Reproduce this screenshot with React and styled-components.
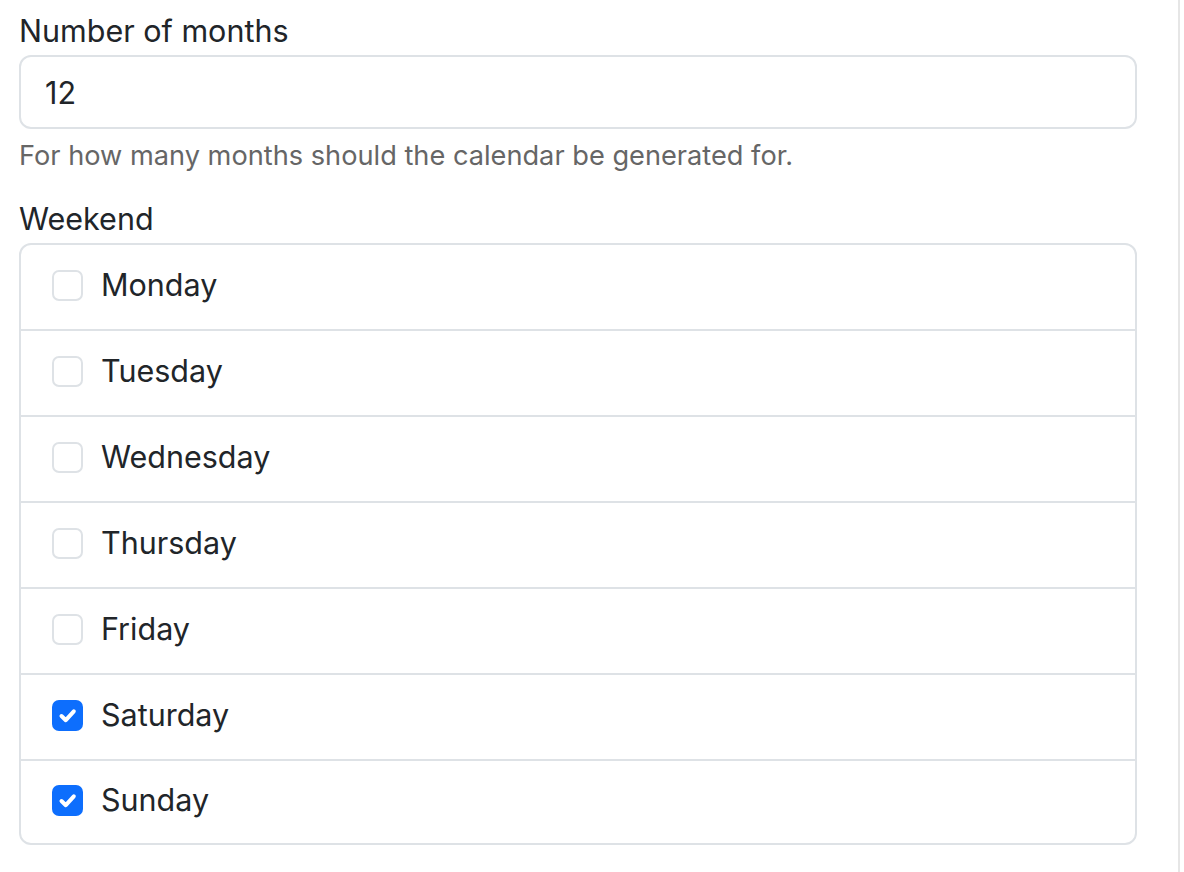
import React, { useState } from 'react';
import styled, { createGlobalStyle } from 'styled-components';

const GlobalStyle = createGlobalStyle`
    html, body {
        margin: 0;
        padding: 0;
        background: #ffffff;
    }
    body {
        font-family: Inter, "Noto Sans", "Liberation Sans", sans-serif;
        color: #212529;
    }
`;

const DAYS = [
    { id: 'mon', label: 'Monday', checked: false },
    { id: 'tue', label: 'Tuesday', checked: false },
    { id: 'wed', label: 'Wednesday', checked: false },
    { id: 'thu', label: 'Thursday', checked: false },
    { id: 'fri', label: 'Friday', checked: false },
    { id: 'sat', label: 'Saturday', checked: true },
    { id: 'sun', label: 'Sunday', checked: true }
];

const App = () => {
    const [months, setMonths] = useState('12');
    const [days, setDays] = useState(DAYS);

    const toggleDay = (id) => {
        setDays(prev => prev.map(d => (d.id === id ? { ...d, checked: !d.checked } : d)));
    };

    return (
        <>
            <GlobalStyle />
            <Page>
                <Form>
                    <Label htmlFor="months">Number of months</Label>
                    <Input
                        id="months"
                        value={months}
                        onChange={(e) => setMonths(e.target.value)}
                    />
                    <HelpText>For how many months should the calendar be generated for.</HelpText>

                    <Label $spaced>Weekend</Label>
                    <DayList>
                        {days.map((day) => (
                            <DayRow key={day.id} onClick={() => toggleDay(day.id)}>
                                <CheckBox $checked={day.checked}>
                                    {day.checked && (
                                        <svg width="31" height="31" viewBox="0 0 31 31" fill="none">
                                            <path
                                                d="M9.5 16l4.3 4.2L21.8 11.3"
                                                stroke="#fff"
                                                strokeWidth="4"
                                                strokeLinecap="round"
                                                strokeLinejoin="round"
                                            />
                                        </svg>
                                    )}
                                </CheckBox>
                                <DayName>{day.label}</DayName>
                            </DayRow>
                        ))}
                    </DayList>
                </Form>
            </Page>
        </>
    );
};

const Page = styled.div`
    width: 1180px;
    min-height: 872px;
    border-right: 2px solid #e6e6e6;
    box-sizing: border-box;
`;

const Form = styled.div`
    width: 1118px;
    padding: 13px 0 0 19px;
    display: flex;
    flex-direction: column;
`;

const Label = styled.label`
    display: block;
    font-size: 30.5px;
    line-height: 36px;
    color: #212529;
    margin-top: ${({ $spaced }) => ($spaced ? '28px' : '0')};
    margin-bottom: 6px;
`;

const Input = styled.input`
    box-sizing: border-box;
    width: 100%;
    height: 74px;
    padding: 0 24px;
    font-family: inherit;
    font-size: 30.5px;
    color: #212529;
    border: 2px solid #dee2e6;
    border-radius: 12px;
    outline: none;
    background: #fff;
`;

const HelpText = styled.div`
    margin-top: 10px;
    font-size: 27.2px;
    line-height: 34px;
    color: #666666;
`;

const DayList = styled.div`
    border: 2px solid #dee2e6;
    border-radius: 12px;
    overflow: hidden;
`;

const DayRow = styled.div`
    box-sizing: border-box;
    display: flex;
    align-items: center;
    gap: 18px;
    height: 86px;
    padding: 0 0 4px 31px;
    border-bottom: 2px solid #dee2e6;
    cursor: pointer;

    &:last-child {
        height: 82px;
        border-bottom: none;
    }
`;

const CheckBox = styled.span`
    box-sizing: border-box;
    width: 31px;
    height: 31px;
    border-radius: 7px;
    display: flex;
    align-items: center;
    justify-content: center;
    border: ${({ $checked }) => ($checked ? 'none' : '2px solid #dee2e6')};
    background: ${({ $checked }) => ($checked ? '#0d6efd' : '#fff')};
`;

const DayName = styled.span`
    font-size: 30.5px;
    line-height: 36px;
    color: #212529;
`;

export default App;
